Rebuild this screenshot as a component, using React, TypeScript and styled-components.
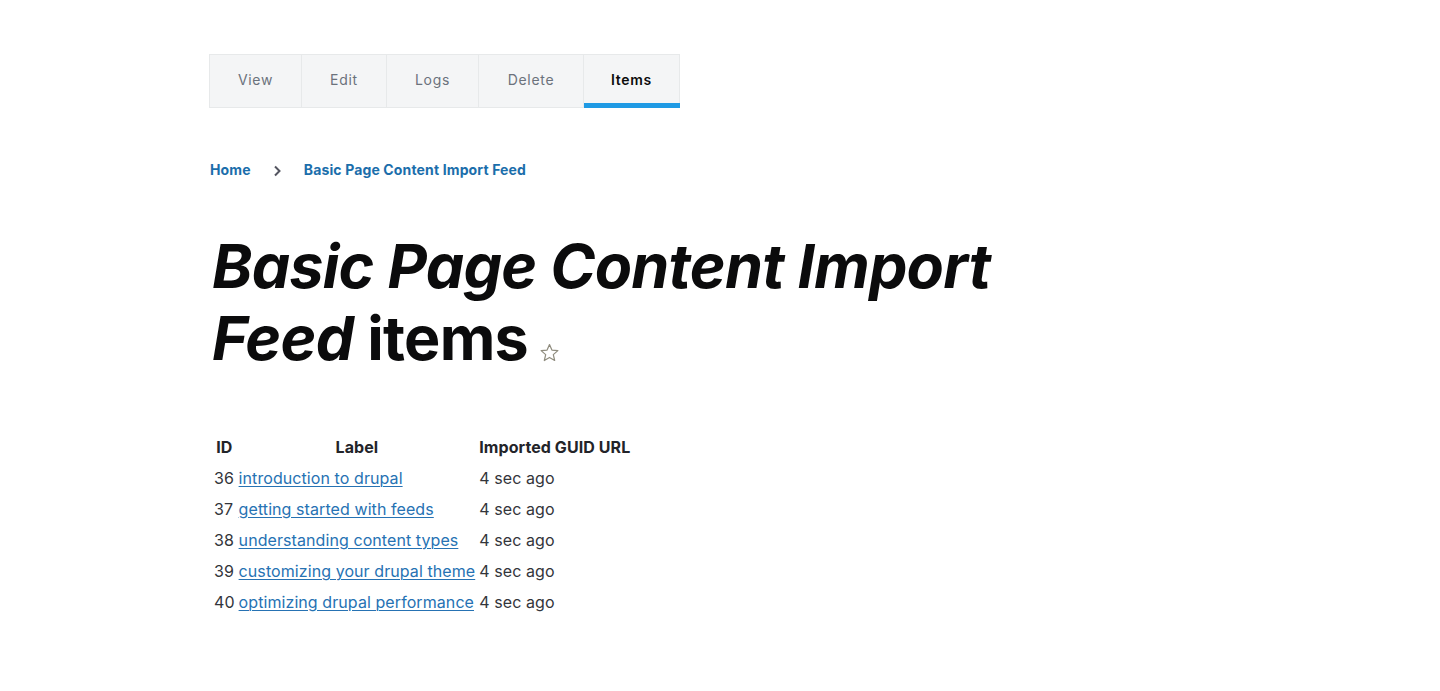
import { createGlobalStyle, styled } from "styled-components";

const GlobalStyle = createGlobalStyle`
	html, body {
		margin: 0;
		padding: 0;
		background: #ffffff;
	}
	body {
		font-family: "Inter", "Liberation Sans", sans-serif;
		color: #232429;
	}
`;

const Main = styled.main`
	padding: 54px 0 40px 209px;
`;

const TabList = styled.ul`
	display: inline-flex;
	margin: 0;
	padding: 0;
	list-style: none;
	border: 1px solid #e7e9ea;
	background: #f4f5f6;
`;

const Tab = styled.li<{ $active?: boolean; $width: number }>`
	position: relative;
	display: flex;
	align-items: center;
	justify-content: center;
	box-sizing: border-box;
	width: ${({ $width }) => $width}px;
	height: 52px;
	padding-bottom: 3px;
	font-size: 14px;
	letter-spacing: 0.05em;
	color: ${({ $active }) => ($active ? "#0b0b0c" : "#6b727c")};
	font-weight: ${({ $active }) => ($active ? 600 : 400)};
	& + & {
		border-left: 1px solid #e7e9ea;
	}
	&::after {
		content: "";
		display: ${({ $active }) => ($active ? "block" : "none")};
		position: absolute;
		left: 0;
		right: -1px;
		bottom: -1px;
		height: 5px;
		background: #1f9ae4;
	}
`;

const Breadcrumb = styled.nav`
	display: flex;
	align-items: center;
	gap: 22px;
	margin-top: 53px;
	padding-left: 1px;
	font-size: 14px;
	font-weight: 700;
	letter-spacing: 0.01em;
	color: #1b6eab;
`;

const Crumb = styled.a`
	color: inherit;
	text-decoration: none;
`;

const Chevron = styled.svg`
	width: 9px;
	height: 12px;
	margin-top: 2px;
`;

const Title = styled.h1`
	margin: 52px 0 0 3px;
	max-width: 820px;
	font-size: 61px;
	line-height: 72px;
	font-weight: 700;
	letter-spacing: -0.012em;
	color: #0b0b0c;
	em {
		font-style: italic;
	}
`;

const Star = styled.svg`
	width: 21px;
	height: 20px;
	margin-left: 11px;
	vertical-align: -3px;
`;

const Table = styled.table`
	margin-top: 56px;
	margin-left: 2px;
	border-collapse: separate;
	border-spacing: 2px;
	font-size: 16px;
	letter-spacing: 0.005em;
`;

const Th = styled.th`
	height: 27px;
	padding: 1px;
	font-weight: 700;
	color: #232429;
	text-align: center;
`;

const Td = styled.td`
	height: 27px;
	padding: 1px;
	color: #33353b;
	white-space: nowrap;
`;

const Link = styled.a`
	color: #2672b3;
	text-decoration: underline;
	text-underline-offset: 2px;
	text-decoration-thickness: 1px;
`;

const tabs = [
	{ label: "View", width: 91 },
	{ label: "Edit", width: 85 },
	{ label: "Logs", width: 92 },
	{ label: "Delete", width: 105 },
	{ label: "Items", width: 96, active: true },
];

const items = [
	{ id: 36, label: "introduction to drupal" },
	{ id: 37, label: "getting started with feeds" },
	{ id: 38, label: "understanding content types" },
	{ id: 39, label: "customizing your drupal theme" },
	{ id: 40, label: "optimizing drupal performance" },
];

export default function App() {
	return (
		<>
			<GlobalStyle />
			<Main>
				<TabList>
					{tabs.map((t) => (
						<Tab key={t.label} $active={t.active} $width={t.width}>
							{t.label}
						</Tab>
					))}
				</TabList>
				<Breadcrumb>
					<Crumb href="#">Home</Crumb>
					<Chevron viewBox="0 0 9 12">
						<path d="M2 1.5L6.5 6L2 10.5" fill="none" stroke="#545560" strokeWidth="2" />
					</Chevron>
					<Crumb href="#">Basic Page Content Import Feed</Crumb>
				</Breadcrumb>
				<Title>
					<em>Basic Page Content Import Feed</em> items
					<Star viewBox="0 0 20 20">
						<path
							d="M10 1.5l2.4 5.6 6 .5-4.6 4 1.4 5.9L10 14.4l-5.2 3.1 1.4-5.9-4.6-4 6-.5z"
							fill="none"
							stroke="#8f8c7e"
							strokeWidth="1.2"
							strokeLinejoin="round"
						/>
					</Star>
				</Title>
				<Table>
					<thead>
						<tr>
							<Th>ID</Th>
							<Th>Label</Th>
							<Th>Imported GUID URL</Th>
						</tr>
					</thead>
					<tbody>
						{items.map((it) => (
							<tr key={it.id}>
								<Td>{it.id}</Td>
								<Td>
									<Link href="#">{it.label}</Link>
								</Td>
								<Td>4 sec ago</Td>
							</tr>
						))}
					</tbody>
				</Table>
			</Main>
		</>
	);
}
